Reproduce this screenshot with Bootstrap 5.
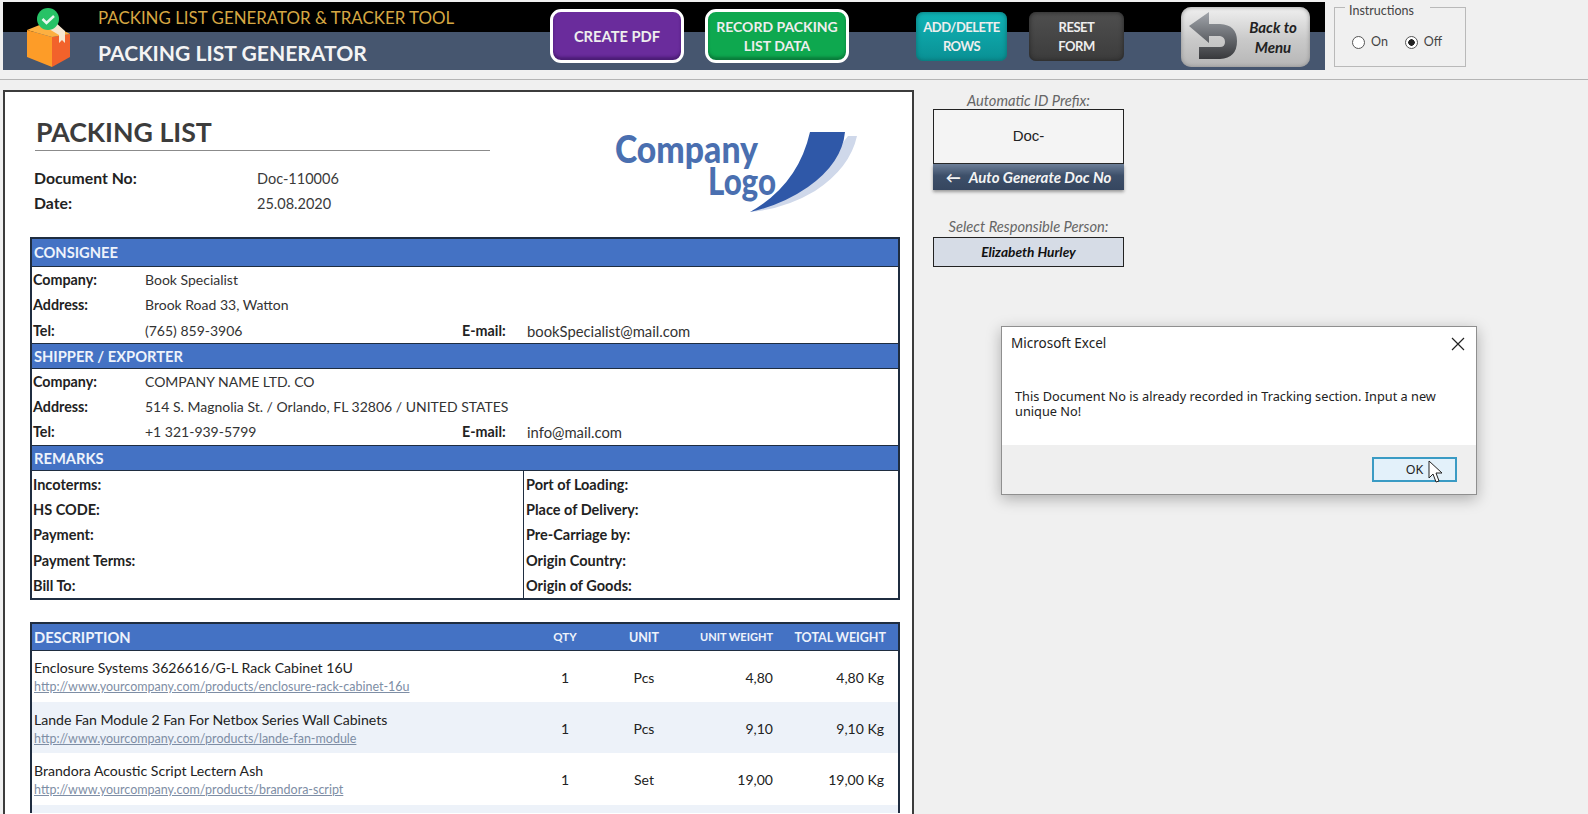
<!DOCTYPE html>
<html lang="en">
<head>
<meta charset="utf-8">
<title>Packing List Generator</title>
<link rel="stylesheet" href="https://cdn.jsdelivr.net/npm/bootstrap@5.3.2/dist/css/bootstrap.min.css">
<style>
  html, body { height: 814px; overflow: hidden; }
  body { background: #f0f0f0; font-family: Lato, "Liberation Sans", sans-serif; font-size: 14px; color: #222; position: relative; }

  /* top ribbon */
  .top-area { height: 80px; border-bottom: 1px solid #b4b4b4; padding: 2px 0 0 3px; }
  .ribbon { width: 1322px; height: 68px; background: linear-gradient(#000 0, #000 30px, #46566f 30px, #46566f 100%); }
  .box-icon { width: 50px; height: 60px; margin: 5px 0 0 22px; flex: none; }
  .ribbon-titles { width: 452px; margin-left: 23px; flex: none; }
  .title-gold { color: #d5a743; font-size: 16.9px; line-height: 20px; margin-top: 6px; }
  .title-white { color: #f4f4f4; font-size: 21.1px; font-weight: 700; line-height: 26px; margin-top: 12px; }
  .rb { flex: none; font-weight: 700; color: #eee; text-align: center; line-height: 19px; display: flex; align-items: center; justify-content: center; }
  .rb-pdf { width: 134px; height: 54px; margin: 7px 0 0 0; background: #6a2c9c; border: 3px solid #fff; border-radius: 11px; font-size: 14.7px; box-shadow: inset 0 -3px 3px #4b1c75; }
  .rb-record { width: 144px; height: 54px; margin: 7px 0 0 21px; background: #0ea84f; border: 3px solid #fff; border-radius: 11px; font-size: 14px; box-shadow: inset 0 -3px 3px #0a7c3a; }
  .rb-add { width: 91px; height: 49px; margin: 10px 0 0 67px; background: linear-gradient(#10b4b6, #0a9094); border-radius: 7px; font-size: 13px; letter-spacing: -.5px; box-shadow: inset 0 0 5px #0a6a6c; }
  .rb-reset { width: 95px; height: 49px; margin: 10px 0 0 22px; background: linear-gradient(#4f4f4f, #3c3c3c); border-radius: 7px; font-size: 13px; letter-spacing: -.5px; box-shadow: inset 0 0 5px #222; }
  .rb-back { width: 129px; height: 60px; margin: 5px 0 0 57px; background: linear-gradient(#f0f0f0, #c9c9c9 55%, #b6b6b6); border-radius: 10px; box-shadow: inset 0 0 4px #8a8a8a; color: #222; font-style: italic; font-size: 15px; }
  .back-arrow { width: 58px; height: 56px; flex: none; margin-right: 2px; }
  .back-text { line-height: 20px; width: 52px; flex: none; margin-right: 5px; }

  .instr-box { width: 132px; height: 60px; margin: 5px 0 0 9px; border: 1px solid #b9b9b9; padding: 25px 0 0 17px; flex: none; position: relative; font-size: 12.5px; color: #444; }
  .instr-label { position: absolute; left: 10px; top: -5px; padding: 0 16px 0 4px; line-height: 16px; background: #f0f0f0; }
  .radio-dot { width: 13px; height: 13px; border-radius: 50%; border: 1px solid #555; background: #fff; display: inline-block; flex: none; }
  .radio-dot.on { background: radial-gradient(circle, #222 0, #222 3px, #fff 3.5px); margin-left: 17px; }
  .radio-text { margin-left: 6px; }

  /* sheet */
  .main-area { padding: 10px 0 0 3px; }
  .sheet { width: 911px; height: 724px; flex: none; overflow: hidden; background: #fff; border: 2px solid #3c3c3c; border-bottom: 0; padding: 0 12px 0 25px; }
  .sheet-top { height: 145px; position: relative; }
  .sheet-head { width: 455px; margin-left: 5px; padding: 21px 0 0 1px; height: 59px; border-bottom: 1px solid #8b8b8b; font-size: 26.7px; line-height: 38px; font-weight: 700; color: #3c3c3c; }
  .doc-line { height: 25px; line-height: 25px; font-size: 14.5px; margin-left: 4px; }
  .doc-line b { width: 223px; font-size: 15.8px; color: #222; display: inline-block; }
  .doc-line span { color: #3a3a3a; }
  .doc-first { margin-top: 14px; }
  .co-logo { position: absolute; left: 580px; top: 31px; width: 250px; height: 90px; }

  .info-box { border: 2px solid #1f2d40; border-top-width: 1px; height: 363px; }
  .sec-head { background: #4472c4; color: #eef3fb; font-weight: 700; font-size: 14.7px; padding-left: 2px; display: flex; align-items: center; border-top: 1px solid #1f2d40; border-bottom: 1px solid #1f2d40; height: 26px; }
  .sec-head.tall { height: 29px; }
  .inf-row { height: 25.3px; line-height: 26.5px; font-size: 14px; display: flex; padding-left: 1px; }
  .inf-row b { width: 112px; flex: none; color: #222; font-size: 14.3px; }
  .inf-row span { color: #333; }
  .inf-val { width: 317px; flex: none; }
  .inf-row .inf-mail { width: 65px; }
  .inf-row .mail-val { font-size: 14.8px; }
  .remarks { display: flex; height: 127.2px; }
  .rem-col { width: 492px; border-right: 1px solid #1f2d40; padding-left: 1px; flex: none; }
  .rem-col + .rem-col { width: auto; border: 0; padding-left: 2px; }
  .rem-col div { height: 25.3px; line-height: 27px; font-weight: 700; font-size: 14.5px; }

  .goods { margin: 22px 0 0 0; width: 870px; table-layout: fixed; border: 2px solid #1f2d40; border-bottom: 0; --bs-table-bg: transparent; }
  .col-qty { width: 108px; }
  .col-unit { width: 50px; }
  .col-uw { width: 118px; }
  .col-tw { width: 112px; }
  .goods th { background: #4472c4; color: #eef3fb; height: 27px; padding: 0 2px; vertical-align: middle; font-size: 12.5px; border: 0; border-bottom: 1px solid #1f2d40; }
  .goods th.th-desc { font-size: 14.7px; }
  .goods th.th-unit { padding-top: 4px; }
  .goods th.th-uw { font-size: 11px; padding-right: 14px; }
  .goods th.th-tw { padding: 4px 12px 0 2px; }
  .goods th.th-qty { font-size: 11.5px; }
  .goods td { padding: 2px 14px 0 2px; vertical-align: middle; height: 51.5px; border: 0; font-size: 14px; color: #222; }
  .goods td.c-mid { padding-right: 2px; }
  .goods td.c-desc { padding: 1px 2px 0; }
  .goods tr.alt td { background: #edf2f9; }
  .goods tr.stub td { height: 8px; padding: 0; }
  .goods .c-num { text-align: right; }
  .goods .c-mid { text-align: center; }
  .goods a { display: block; color: #7e8ea5; font-size: 12.5px; line-height: 16.5px; }
  .goods .prod { display: block; line-height: 22px; color: #222; font-size: 14.1px; }

  /* side panel */
  .side { width: 191px; margin-left: 19px; padding-top: 1px; flex: none; font-size: 14.7px; font-style: italic; color: #666; text-align: center; }
  .side-label { line-height: 18px; white-space: nowrap; }
  .side-second { margin-top: 27px; margin-bottom: 2px; }
  .prefix-box { height: 55px; border: 1px solid #222; background: #f4f4f4; font-style: normal; font-family: "Liberation Sans", sans-serif; font-size: 15px; color: #222; display: flex; align-items: center; justify-content: center; }
  .gen-btn { height: 26px; background: linear-gradient(#6c7e98, #3d4f69 45%, #36465f); color: #f4f4f4; font-weight: 700; font-size: 15px; display: flex; align-items: center; justify-content: center; gap: 8px; box-shadow: 0 2px 3px #999; white-space: nowrap; }
  .person { height: 30px; border: 1px solid #222; background: #d6dce6; color: #111; font-weight: 700; font-size: 13.7px; display: flex; align-items: center; justify-content: center; }

  /* message box */
  .msg-box { position: absolute; left: 1001px; top: 326px; width: 476px; height: 169px; background: #fff; border: 1px solid #8f8f8f; box-shadow: 0 4px 14px rgba(0,0,0,.28); font-family: "Noto Sans", sans-serif; font-size: 12.75px; color: #222; display: flex; flex-direction: column; }
  .msg-title { font-size: 13.5px; padding: 6px 11px 0 9px; height: 36px; display: flex; justify-content: space-between; }
  .msg-text { flex: 1; padding: 26px 20px 0 13px; line-height: 15px; }
  .msg-foot { height: 49px; background: #efefef; display: flex; justify-content: flex-end; padding: 12px 19px 0 0; }
  .msg-ok { width: 85px; height: 25px; border: 2px solid #3a9bc4; background: #e3f1fa; padding-top: 1px; display: flex; align-items: center; justify-content: center; font-size: 12.5px; position: relative; }
  .msg-cursor { position: absolute; left: 54px; top: 1px; width: 15px; height: 24px; }
</style>
</head>
<body>
  <div class="top-area d-flex">
    <div class="ribbon d-flex flex-shrink-0">
      <svg class="box-icon" viewBox="0 0 50 60">
        <polygon points="27,30 45,27 45,50 27,60" fill="#f2622b"/>
        <polygon points="2,23 27,30 27,60 2,50" fill="#fd9c28"/>
        <polygon points="2,23 22,15 45,27 27,30" fill="#fdb041"/>
        <polygon points="16,16 30,15 40,24 40,36 37,33 34,36 34,28 24,22" fill="#f6e6cf"/>
        <circle cx="23" cy="12" r="11" fill="#27c266"/>
        <path d="M17.5 12 l4 4 l7.5-7" fill="none" stroke="#e8f7ee" stroke-width="2.5"/>
      </svg>
      <div class="ribbon-titles">
        <div class="title-gold">PACKING LIST GENERATOR &amp; TRACKER TOOL</div>
        <div class="title-white">PACKING LIST GENERATOR</div>
      </div>
      <div class="rb rb-pdf">CREATE PDF</div>
      <div class="rb rb-record">RECORD PACKING<br>LIST DATA</div>
      <div class="rb rb-add">ADD/DELETE<br>ROWS</div>
      <div class="rb rb-reset">RESET<br>FORM</div>
      <div class="rb rb-back">
        <svg class="back-arrow" viewBox="0 0 58 56">
          <defs>
            <linearGradient id="arrowShade" x1="0" y1="0" x2="0" y2="1">
              <stop offset="0" stop-color="#a2a6ac"/>
              <stop offset=".5" stop-color="#6b6e73"/>
              <stop offset="1" stop-color="#38393c"/>
            </linearGradient>
          </defs>
          <path d="M22 3 L2 17 L22 34 L22 27 L33 27 Q38 28 38 33 Q38 38 33 38 L12 38 L12 50 L33 50 Q50 49 50 32 Q50 16 33 15 L22 15 Z" fill="url(#arrowShade)"/>
        </svg>
        <div class="back-text">Back to<br>Menu</div>
      </div>
    </div>
    <div class="instr-box">
      <span class="instr-label">Instructions</span>
      <div class="d-flex align-items-center">
        <span class="radio-dot"></span><span class="radio-text">On</span>
        <span class="radio-dot on"></span><span class="radio-text">Off</span>
      </div>
    </div>
  </div>

  <div class="main-area d-flex">
    <div class="sheet">
      <div class="sheet-top">
        <div class="sheet-head">PACKING LIST</div>
        <div class="doc-line doc-first"><b>Document No:</b><span>Doc-110006</span></div>
        <div class="doc-line"><b>Date:</b><span>25.08.2020</span></div>
        <svg class="co-logo" viewBox="0 0 250 90">
          <path d="M238 13 L247 13 Q240 45 205 68 Q175 86 140 89 Q200 66 238 13 Z" fill="#cfd8ea"/>
          <path d="M200 9 L235 9 Q232 40 198 64 Q172 82 140 89 Q188 62 200 9 Z" fill="#2f58a8"/>
          <text font-family="Lato, sans-serif" font-weight="900" font-size="37" fill="#4a6fb0"><tspan x="5" y="40" textLength="143" lengthAdjust="spacingAndGlyphs">Company</tspan><tspan x="98" y="72" textLength="68" lengthAdjust="spacingAndGlyphs">Logo</tspan></text>
        </svg>
      </div>

      <div class="info-box">
        <div class="sec-head tall">CONSIGNEE</div>
        <div class="inf-row"><b>Company:</b><span>Book Specialist</span></div>
        <div class="inf-row"><b>Address:</b><span>Brook Road 33, Watton</span></div>
        <div class="inf-row"><b>Tel:</b><span class="inf-val">(765) 859-3906</span><b class="inf-mail">E-mail:</b><span class="mail-val">bookSpecialist@mail.com</span></div>
        <div class="sec-head">SHIPPER / EXPORTER</div>
        <div class="inf-row"><b>Company:</b><span>COMPANY NAME LTD. CO</span></div>
        <div class="inf-row"><b>Address:</b><span>514 S. Magnolia St. / Orlando, FL 32806 / UNITED STATES</span></div>
        <div class="inf-row"><b>Tel:</b><span class="inf-val">+1 321-939-5799</span><b class="inf-mail">E-mail:</b><span class="mail-val">info@mail.com</span></div>
        <div class="sec-head">REMARKS</div>
        <div class="remarks">
          <div class="rem-col">
            <div>Incoterms:</div>
            <div>HS CODE:</div>
            <div>Payment:</div>
            <div>Payment Terms:</div>
            <div>Bill To:</div>
          </div>
          <div class="rem-col">
            <div>Port of Loading:</div>
            <div>Place of Delivery:</div>
            <div>Pre-Carriage by:</div>
            <div>Origin Country:</div>
            <div>Origin of Goods:</div>
          </div>
        </div>
      </div>

      <table class="table goods">
        <colgroup><col><col class="col-qty"><col class="col-unit"><col class="col-uw"><col class="col-tw"></colgroup>
        <thead>
          <tr><th class="th-desc">DESCRIPTION</th><th class="c-mid th-qty">QTY</th><th class="c-mid th-unit">UNIT</th><th class="c-num th-uw">UNIT WEIGHT</th><th class="c-num th-tw">TOTAL WEIGHT</th></tr>
        </thead>
        <tbody>
          <tr><td class="c-desc"><span class="prod">Enclosure Systems 3626616/G-L Rack Cabinet 16U</span><a href="#">http://www.yourcompany.com/products/enclosure-rack-cabinet-16u</a></td><td class="c-mid">1</td><td class="c-mid">Pcs</td><td class="c-num">4,80</td><td class="c-num">4,80 Kg</td></tr>
          <tr class="alt"><td class="c-desc"><span class="prod">Lande Fan Module 2 Fan For Netbox Series Wall Cabinets</span><a href="#">http://www.yourcompany.com/products/lande-fan-module</a></td><td class="c-mid">1</td><td class="c-mid">Pcs</td><td class="c-num">9,10</td><td class="c-num">9,10 Kg</td></tr>
          <tr><td class="c-desc"><span class="prod">Brandora Acoustic Script Lectern Ash</span><a href="#">http://www.yourcompany.com/products/brandora-script</a></td><td class="c-mid">1</td><td class="c-mid">Set</td><td class="c-num">19,00</td><td class="c-num">19,00 Kg</td></tr>
          <tr class="alt stub"><td></td><td></td><td></td><td></td><td></td></tr>
        </tbody>
      </table>
    </div>

    <div class="side">
      <div class="side-label">Automatic ID Prefix:</div>
      <div class="prefix-box">Doc-</div>
      <div class="gen-btn"><span>&#8592;</span><span>Auto Generate Doc No</span></div>
      <div class="side-label side-second">Select Responsible Person:</div>
      <div class="person">Elizabeth Hurley</div>
    </div>
  </div>

  <div class="msg-box">
    <div class="msg-title">
      <span>Microsoft Excel</span>
      <svg width="14" height="14" viewBox="0 0 14 14" class="mt-1"><path d="M1 1 L13 13 M13 1 L1 13" stroke="#222" stroke-width="1.2"/></svg>
    </div>
    <div class="msg-text">This Document No is already recorded in Tracking section. Input a new unique No!</div>
    <div class="msg-foot">
      <div class="msg-ok">OK
        <svg class="msg-cursor" viewBox="0 0 15 24"><path d="M1 1 L1 18 L5 14 L8 22 L11 21 L8 13 L14 13 Z" fill="#fff" stroke="#222" stroke-width="1"/></svg>
      </div>
    </div>
  </div>
  <script src="https://cdn.jsdelivr.net/npm/bootstrap@5.3.2/dist/js/bootstrap.bundle.min.js"></script>
</body>
</html>
